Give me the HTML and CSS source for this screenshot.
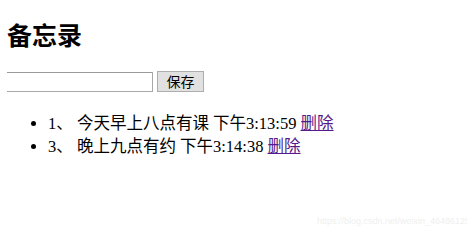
FILE: index.html
```html
<!DOCTYPE html>
<html lang="zh">
<head>
<meta charset="utf-8">
<title>备忘录</title>
<link rel="stylesheet" href="styles.css">
</head>
<body>
<h1 class="title">备忘录</h1>
<div class="form">
  <input class="field" type="text">
  <button class="save" type="button">保存</button>
</div>
<ul class="list">
  <li class="item">1、 今天早上八点有课 下午3:13:59 <a class="del" href="#">删除</a></li>
  <li class="item">3、 晚上九点有约 下午3:14:38 <a class="del" href="#">删除</a></li>
</ul>
<div class="mark">https://blog.csdn.net/weixin_46486125</div>
</body>
</html>
```

FILE: styles.css
```css
html, body {
  background: #ffffff;
}
body {
  margin: 0 7px;
  padding-top: 1px;
  font-family: "Liberation Serif", "Noto Sans CJK SC", serif;
  color: #000;
  position: relative;
  height: 231px;
}
.title {
  font-family: "Noto Sans CJK SC", sans-serif;
  font-size: 25px;
  font-weight: bold;
  line-height: 34px;
  margin: 16px 0 20px 0;
}
.form {
  display: flex;
  align-items: center;
  gap: 4px;
  margin-left: -1px;
}
.field {
  box-sizing: border-box;
  width: 147px;
  height: 20px;
  border: 1px solid #a9a9a9;
  border-top-color: #9a9a9a;
  margin: 0;
  padding: 1px 2px;
  background: #fff;
}
.save {
  box-sizing: border-box;
  width: 47px;
  height: 21px;
  margin: 0;
  padding: 0;
  border: 1px solid #adadad;
  background: #e1e1e1;
  font-family: "Noto Sans CJK SC", sans-serif;
  font-size: 14px;
  line-height: 19px;
  color: #000;
}
.list {
  margin: 20px 0 0 0;
  padding-left: 41px;
  font-size: 16.5px;
  line-height: 23px;
}
.del {
  color: #551a8b;
}
.mark {
  position: absolute;
  right: -3px;
  bottom: 6px;
  font-family: "Liberation Sans", sans-serif;
  font-size: 9px;
  color: #efefef;
}
```
